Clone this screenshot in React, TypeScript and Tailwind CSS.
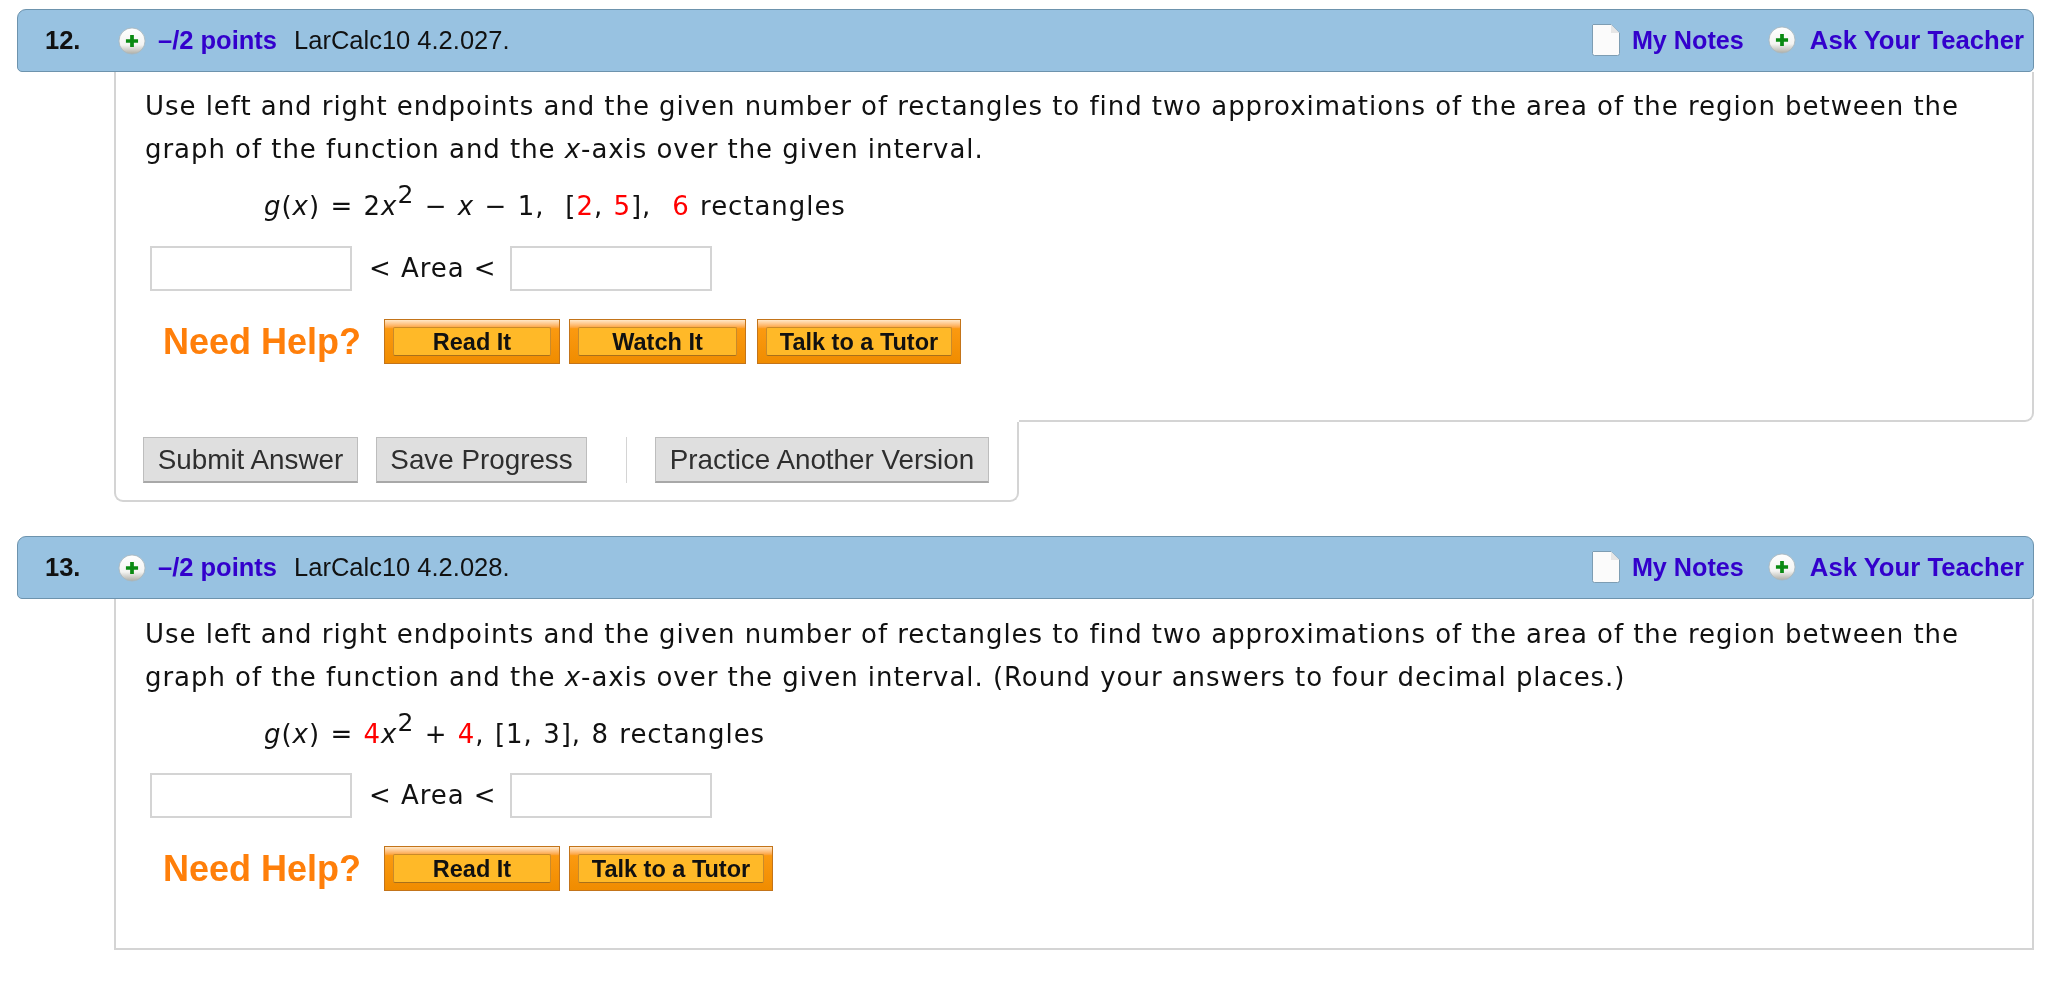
const arial = "font-['Liberation_Sans',Arial,sans-serif]";

function PlusIcon() {
  return (
    <svg width="28" height="28" viewBox="0 0 30 30" className="shrink-0">
      <defs>
        <linearGradient id="ring" x1="0" y1="0" x2="0" y2="1">
          <stop offset="0" stopColor="#ffffff" />
          <stop offset="0.65" stopColor="#f4f4f2" />
          <stop offset="1" stopColor="#aeaea6" />
        </linearGradient>
      </defs>
      <circle cx="15" cy="15" r="14" fill="url(#ring)" stroke="#a9b8bf" strokeWidth="1" />
      <path d="M13 8.5h4v4.5h4.5v4H17v4.5h-4V17H8.5v-4H13z" fill="#0a8a12" />
    </svg>
  );
}

function DocIcon() {
  return (
    <svg width="30" height="34" viewBox="0 0 30 34" className="shrink-0">
      <path d="M2 1.5H20L28.5 10V30.5Q28.5 32.5 26.5 32.5H3.5Q1.5 32.5 1.5 30.5V2Z" fill="#fbfbfb" stroke="#7d9db3" strokeWidth="1" />
      <path d="M20 1.5V10H28.5Z" fill="#e6e6e6" />
    </svg>
  );
}

function Header({ num, code }: { num: string; code: string }) {
  return (
    <div className={`flex h-[63px] items-center rounded-t-[9px] rounded-b-[5px] border border-[#6d93ad] bg-[#98c2e1] text-[25.5px] ${arial}`}>
      <span className="ml-[27px] w-[73px] font-bold text-[#111]">{num}</span>
      <PlusIcon />
      <span className="ml-[12px] font-bold text-[#3300cc]">–/2 points</span>
      <span className="ml-[17px] text-[#111]">{code}</span>
      <div className="ml-auto mr-[9px] flex items-center text-[25px] font-bold text-[#3300cc]">
        <DocIcon />
        <span className="ml-[11px] text-[25.2px]">My Notes</span>
        <span className="ml-[24px]"><PlusIcon /></span>
        <span className="ml-[14px] text-[25.7px]">Ask Your Teacher</span>
      </div>
    </div>
  );
}

const bodyText = "text-[26px] tracking-[0.95px] text-[#111]";

function AreaRow() {
  return (
    <div className={`ml-[34px] mt-[18px] flex items-center ${bodyText}`}>
      <div className="h-[45px] w-[202px] border-2 border-[#d4d4d4] bg-white" />
      <span className="ml-[17px] w-[141px]">&lt; Area &lt;</span>
      <div className="h-[45px] w-[202px] border-2 border-[#d4d4d4] bg-white" />
    </div>
  );
}

function HelpButton({ label, w }: { label: string; w: string }) {
  return (
    <div className={`${w} h-[45px] border border-[#c3741a] bg-linear-to-b from-[#ffe8c8] via-[#fb9a10] via-20% to-[#f08c00] p-[7px_8px]`}>
      <div className="flex h-full items-center justify-center rounded-[2px] border border-[#c98a2a] border-b-[#a8701a] bg-[#ffb928] pt-[3px] text-[23.5px] font-bold text-[#111]">
        {label}
      </div>
    </div>
  );
}

function Help({ buttons }: { buttons: [string, string][] }) {
  return (
    <div className={`ml-[47px] mt-[23px] flex items-center ${arial}`}>
      <span className="w-[221px] pt-[1px] text-[36px] font-bold text-[#ff7f0a]">Need Help?</span>
      <div className="flex gap-[9px]">
        {buttons.map(([l, w]) => (
          <HelpButton key={l} label={l} w={w} />
        ))}
      </div>
    </div>
  );
}

function GreyButton({ label, w }: { label: string; w: string }) {
  return (
    <div className={`${w} flex h-[46px] items-center justify-center border border-[#bdbdbd] border-b-2 border-b-[#a8a8a8] bg-[#dfdfdf] text-[27.8px] text-[#2e2e2e]`}>
      {label}
    </div>
  );
}

export default function App() {
  const para = `ml-[29px] leading-[43px] ${bodyText}`;
  const formula = `ml-[148px] mt-[14px] leading-[43px] [word-spacing:1.2px] ${bodyText}`;
  return (
    <div className="min-h-[997px] bg-white pt-[9px] pl-[17px] pr-[12px] font-['DejaVu_Sans',Verdana,sans-serif] blur-[0.6px]">
      {/* Question 12 */}
      <Header num="12." code="LarCalc10 4.2.027." />
      <div className="ml-[97px]">
        <div className="border-l-2 border-[#d4d4d4]">
          <div className="h-[340px] border-r-2 border-[#d4d4d4] pt-[13px]">
            <p className={para}>
              Use left and right endpoints and the given number of rectangles to find two approximations of the area of the region between the<br />
              graph of the function and the <i>x</i>-axis over the given interval.
            </p>
            <p className={`${formula} h-[43px]`}>
              <i>g</i>(<i>x</i>) = 2<i>x</i><sup className="text-[25px]">2</sup> − <i>x</i> − 1,&nbsp; [<span className="text-[#f00]">2</span>, <span className="text-[#f00]">5</span>],&nbsp; <span className="text-[#f00]">6</span> rectangles
            </p>
            <AreaRow />
            <Help buttons={[["Read It", "w-[176px]"], ["Watch It", "w-[177px]"], ["Talk to a Tutor", "ml-[2px] w-[204px]"]]} />
          </div>
          <div className="flex h-[10px]">
            <div className="w-[903px]" />
            <div className="flex-1 rounded-br-[9px] border-r-2 border-b-2 border-[#d4d4d4]" />
          </div>
        </div>
        <div className={`flex h-[80px] w-[905px] items-start rounded-b-[9px] border-x-2 border-b-2 border-[#d4d4d4] pt-[15px] pl-[27px] ${arial}`}>
          <GreyButton label="Submit Answer" w="w-[215px]" />
          <div className="ml-[18px]"><GreyButton label="Save Progress" w="w-[211px]" /></div>
          <div className="ml-[39px] h-[46px] w-px bg-[#d4d4d4]" />
          <div className="ml-[28px]"><GreyButton label="Practice Another Version" w="w-[334px]" /></div>
        </div>
      </div>

      {/* Question 13 */}
      <div className="mt-[34px]">
        <Header num="13." code="LarCalc10 4.2.028." />
      </div>
      <div className="ml-[97px] h-[351px] border-x-2 border-b-2 border-[#d4d4d4] pt-[14px]">
        <p className={para}>
          Use left and right endpoints and the given number of rectangles to find two approximations of the area of the region between the<br />
          graph of the function and the <i>x</i>-axis over the given interval. (Round your answers to four decimal places.)
        </p>
        <p className={`${formula} h-[42px]`}>
          <i>g</i>(<i>x</i>) = <span className="text-[#f00]">4</span><i>x</i><sup className="text-[25px]">2</sup> + <span className="text-[#f00]">4</span>, [1, 3], 8 rectangles
        </p>
        <AreaRow />
        <Help buttons={[["Read It", "w-[176px]"], ["Talk to a Tutor", "w-[204px]"]]} />
      </div>
    </div>
  );
}
